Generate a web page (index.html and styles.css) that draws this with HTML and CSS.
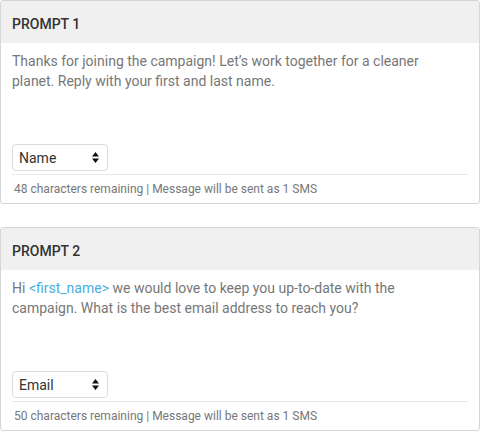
FILE: index.html
```html
<!DOCTYPE html>
<html>
<head>
<meta charset="utf-8">
<link rel="stylesheet" href="styles.css">
</head>
<body>
<div class="card">
  <div class="head">PROMPT 1</div>
  <div class="body">
    <p class="msg">Thanks for joining the campaign! Let’s work together for a cleaner planet. Reply with your first and last name.</p>
    <div class="select"><span>Name</span>
      <svg class="arrows" width="7" height="11" viewBox="0 0 7 11"><path d="M3.5 0 L7 4.5 L0 4.5 Z M0 6.5 L7 6.5 L3.5 11 Z" fill="#111"/></svg>
    </div>
    <div class="foot">48 characters remaining | Message will be sent as 1 SMS</div>
  </div>
</div>
<div class="card">
  <div class="head">PROMPT 2</div>
  <div class="body">
    <p class="msg">Hi <span class="tag">&lt;first_name&gt;</span> we would love to keep you up-to-date with the campaign. What is the best email address to reach you?</p>
    <div class="select"><span>Email</span>
      <svg class="arrows" width="7" height="11" viewBox="0 0 7 11"><path d="M3.5 0 L7 4.5 L0 4.5 Z M0 6.5 L7 6.5 L3.5 11 Z" fill="#111"/></svg>
    </div>
    <div class="foot">50 characters remaining | Message will be sent as 1 SMS</div>
  </div>
</div>
</body>
</html>
```
FILE: styles.css
```css
* { box-sizing: border-box; }
body {
  margin: 0;
  font-family: Roboto, "Liberation Sans", sans-serif;
  background: #fff;
}
.card {
  width: 480px;
  border: 1px solid #d6d6d6;
  border-radius: 3px;
  overflow: hidden;
}
.card + .card { margin-top: 23px; }
.head {
  height: 42px;
  background: #f0f0f0;
  padding: 3px 11px 0 11px;
  display: flex;
  align-items: center;
  font-size: 14px;
  font-weight: 500;
  color: #333;
}
.body {
  padding: 8px 11px 0 11px;
}
.msg {
  margin: 0 0 13px 0;
  padding-right: 20px;
  min-height: 80px;
  font-size: 14px;
  line-height: 20px;
  color: #777;
}
.tag { color: #4aaee0; }
.select {
  width: 96px;
  height: 27px;
  border: 1px solid #dcdcdc;
  border-radius: 4px;
  display: flex;
  align-items: center;
  justify-content: space-between;
  padding: 0 8px 0 6px;
  font-size: 14px;
  color: #333;
}
.foot {
  margin-top: 3px;
  border-top: 1px solid #e8e8e8;
  padding: 6px 0 6px 2px;
  font-size: 12px;
  line-height: 16px;
  color: #777;
}
```
